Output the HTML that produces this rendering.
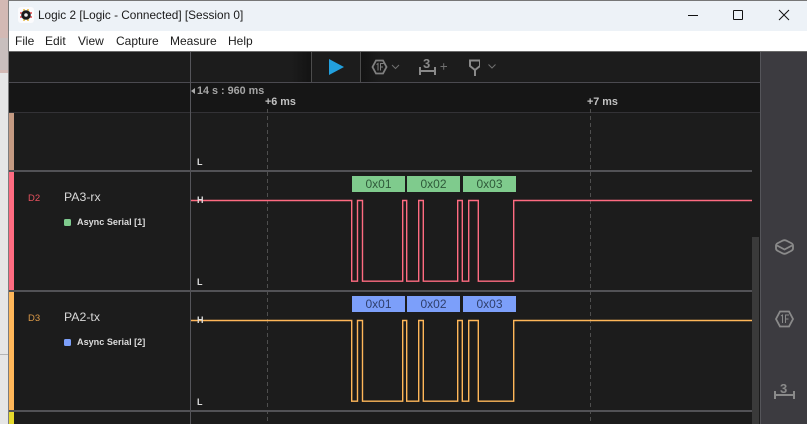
<!DOCTYPE html>
<html><head><meta charset="utf-8">
<style>
html,body{margin:0;padding:0;background:#1c1c1c}
#p{position:relative;width:807px;height:424px;overflow:hidden;background:#1c1c1c;font-family:"Liberation Sans",sans-serif}
#p div,#p svg{position:absolute}
.m{top:34px;font-size:12px;color:#1c1c1c;line-height:14px}
.lab{height:16px;width:53px;text-align:center;font-size:12px;line-height:16px}
.g{background:#7fcb8d;color:#2f5a3a}
.b{background:#7c9ffa;color:#2f3f6c}
.hl{font-size:9px;font-weight:bold;color:#ddd;line-height:10px;background:#1c1c1c}
.ms{font-size:10.8px;font-weight:bold;color:#c2c2c2;line-height:12px}
.d{left:28px;font-size:9.5px;line-height:10px}
.nm{left:64px;font-size:12.3px;color:#d8d8d8;line-height:14px}
.as{left:77px;font-size:9.1px;font-weight:bold;color:#dcdcdc;line-height:12px}
.sq{left:64px;width:7px;height:7px;border-radius:1.5px}
</style></head><body><div id="p">
<div style="left:0;top:0;width:8px;height:38px;background:#d3b9b4"></div>
<div style="left:0;top:38px;width:8px;height:32px;background:#c8bfbe"></div>
<div style="left:0;top:70px;width:8px;height:3px;background:#d3b9b4"></div>
<div style="left:0;top:73px;width:8px;height:351px;background:#e6e6e6"></div>
<div style="left:0;top:354px;width:8px;height:1px;background:#b5b5b5"></div>
<div style="left:8px;top:0;width:1px;height:424px;background:#7d7d7d"></div>
<div style="left:9px;top:0;width:798px;height:1px;background:#777"></div>
<div style="left:9px;top:1px;width:798px;height:30px;background:#edf2f7"></div>
<div style="left:9px;top:31px;width:798px;height:20px;background:#fff"></div>
<div style="left:9px;top:51px;width:798px;height:1px;background:#6a6a6a"></div>

<svg style="left:17px;top:6px" width="18" height="18" viewBox="0 0 18 18"><rect x="1" y="1" width="16" height="16" rx="3" fill="#fbfbfd"/><path d="M3 7h12M3 11h12" stroke="#e8494c" stroke-width="1.4"/><path d="M7 3v12M11 3v12" stroke="#e5b52e" stroke-width="1.4"/><circle cx="9" cy="9" r="4.8" fill="#1b1b1b"/><circle cx="9" cy="9" r="1.8" fill="#eee"/></svg>
<div style="left:38px;top:8px;font-size:11.8px;line-height:15px;color:#1a1a1a">Logic 2 [Logic - Connected] [Session 0]</div>

<div style="left:688px;top:15px;width:10px;height:1px;background:#111"></div>
<div style="left:733px;top:10px;width:8px;height:8px;border:1px solid #111;border-radius:1px"></div>
<svg style="left:778px;top:9px" width="12" height="12" viewBox="0 0 12 12"><path d="M1 1l10 10M11 1L1 11" stroke="#111" stroke-width="1"/></svg>

<div class="m" style="left:15px">File</div>
<div class="m" style="left:45px">Edit</div>
<div class="m" style="left:78px">View</div>
<div class="m" style="left:116px">Capture</div>
<div class="m" style="left:170px">Measure</div>
<div class="m" style="left:228px">Help</div>

<div style="left:9px;top:83px;width:751px;height:29px;background:#161616"></div>
<div style="left:9px;top:82px;width:751px;height:1px;background:#4b4a50"></div>
<div style="left:9px;top:112px;width:751px;height:1px;background:#333236"></div>
<div style="left:190px;top:52px;width:1px;height:372px;background:#55555a"></div>

<div style="left:291px;top:52px;width:20px;height:30px;background:linear-gradient(90deg,#1c1c1c,#131313)"></div>
<div style="left:361px;top:52px;width:20px;height:30px;background:linear-gradient(90deg,#131313,#1c1c1c)"></div>
<div style="left:311px;top:52px;width:1px;height:30px;background:#4c4c4c"></div>
<div style="left:360px;top:52px;width:1px;height:30px;background:#4c4c4c"></div>
<svg style="left:327px;top:58px" width="18" height="18" viewBox="0 0 18 18"><path d="M2 1L17 9 2 17z" fill="#22a0de"/></svg>
<svg style="left:370px;top:58px" width="110" height="20" viewBox="0 0 110 20">
<path d="M2.500 9L6 2.500h7L16.500 9 13 15.500H6z" fill="none" stroke="#808080" stroke-width="1.800"/>
<path d="M6.500 6.500l1.500-1v7M10.500 12.500V5.500h3M10.500 9h2.500" fill="none" stroke="#808080" stroke-width="1"/>
<path d="M22 7l3.500 3.500L29 7" fill="none" stroke="#707070" stroke-width="1"/>
<path d="M50 9v8M65 9v8M50 13h15" fill="none" stroke="#8a8a8a" stroke-width="2"/>
<path d="M70.500 8.500h6.500M73.700 5.300v6.500" fill="none" stroke="#707070" stroke-width="1"/>
<path d="M100 2.500h10v5.500l-5 4-5-4zM105 12v6" fill="none" stroke="#8a8a8a" stroke-width="2"/>
</svg>
<div style="left:423px;top:58px;font-size:13px;font-weight:bold;color:#8a8a8a;line-height:12px">3</div>
<svg style="left:487px;top:62px" width="10" height="8" viewBox="0 0 10 8"><path d="M1.500 2.500l3.500 3.500 3.500-3.500" fill="none" stroke="#707070" stroke-width="1"/></svg>

<svg style="left:191px;top:88px" width="5" height="6" viewBox="0 0 5 6"><path d="M4 0v6L0 3z" fill="#aaa"/></svg>
<div class="ms" style="left:197px;top:85px;color:#a5a5a5">14 s : 960 ms</div>
<div class="ms" style="left:265px;top:96px">+6 ms</div>
<div class="ms" style="left:587px;top:96px">+7 ms</div>

<svg style="left:0;top:0" width="807" height="424" viewBox="0 0 807 424">
<path d="M267.500 109V424M590.500 109V424" stroke="#4e4e4e" stroke-width="1" stroke-dasharray="4 3" fill="none"/>
</svg>

<div style="left:9px;top:113px;width:5px;height:57px;background:#c49a82"></div>
<div style="left:9px;top:172px;width:5px;height:118px;background:#ff6b81"></div>
<div style="left:9px;top:292px;width:5px;height:118px;background:#ffb759"></div>
<div style="left:9px;top:412px;width:5px;height:12px;background:#e6d92c"></div>
<div style="left:9px;top:170px;width:743px;height:2px;background:#525256"></div>
<div style="left:9px;top:290px;width:743px;height:2px;background:#525256"></div>
<div style="left:9px;top:410px;width:743px;height:2px;background:#525256"></div>

<div class="d" style="top:194px;color:#e8525f">D2</div>
<div class="nm" style="top:190px">PA3-rx</div>
<div class="sq" style="top:219px;background:#7fcb8d"></div>
<div class="as" style="top:216px">Async Serial [1]</div>
<div class="d" style="top:314px;color:#dc9a48">D3</div>
<div class="nm" style="top:310px">PA2-tx</div>
<div class="sq" style="top:339px;background:#7c9ffa"></div>
<div class="as" style="top:336px">Async Serial [2]</div>

<svg style="left:0;top:0" width="807" height="424" viewBox="0 0 807 424" fill="none" stroke-width="1.400">
<path stroke="#ff6b81" d="M191 200.500H351.700V281.200H357.500V200.500H362.500V281.200H402.700V200.500H406.700V281.200H418.700V200.500H423.300V281.200H457.700V200.500H462.300V281.200H468.700V200.500H478.300V281.200H513.700V200.500H752"/>
<path stroke="#ffb759" d="M191 320.500H351.700V401.200H357.500V320.500H362.500V401.200H402.700V320.500H406.700V401.200H418.700V320.500H423.300V401.200H457.700V320.500H462.300V401.200H468.700V320.500H478.300V401.200H513.700V320.500H752"/>
</svg>

<div class="hl" style="left:197px;top:157px">L</div>
<div class="hl" style="left:197px;top:195px;background:none">H</div>
<div class="hl" style="left:197px;top:277px">L</div>
<div class="hl" style="left:197px;top:315px;background:none">H</div>
<div class="hl" style="left:197px;top:397px">L</div>

<div class="lab g" style="left:352px;top:176px">0x01</div>
<div class="lab g" style="left:407px;top:176px">0x02</div>
<div class="lab g" style="left:463px;top:176px">0x03</div>
<div class="lab b" style="left:352px;top:296px">0x01</div>
<div class="lab b" style="left:407px;top:296px">0x02</div>
<div class="lab b" style="left:463px;top:296px">0x03</div>

<div style="left:752px;top:237px;width:7px;height:187px;background:#3a3a3a"></div>
<div style="left:760px;top:52px;width:1px;height:372px;background:#55555a"></div>
<div style="left:761px;top:52px;width:46px;height:372px;background:#3c3b40"></div>

<svg style="left:770px;top:234px" width="30" height="170" viewBox="0 0 30 170" fill="none" stroke="#8a8a8a">
<path d="M6 11.500Q6 10 8 9l5-2.500q1.500-.6 3 0l5 2.500q2 1 2 2.500v3q0 1.500-2 2.500l-5 2.500q-1.500.6-3 0l-5-2.500q-2-1-2-2.500zM7 11.500l7.500 4 7.500-4" stroke-width="1.800"/>
<path d="M6 85l4-7.500h9l4 7.500-4 7.500h-9z" stroke-width="1.800"/>
<path d="M11 82l1.500-1v8M15.500 89v-8h3.500M15.500 85h3" stroke-width="1"/>
<path d="M5 157v8M24 157v8M5 161h19" stroke-width="2"/>
</svg>
<div style="left:780px;top:383px;font-size:13px;font-weight:bold;color:#8a8a8a;line-height:12px">3</div>
</div></body></html>
